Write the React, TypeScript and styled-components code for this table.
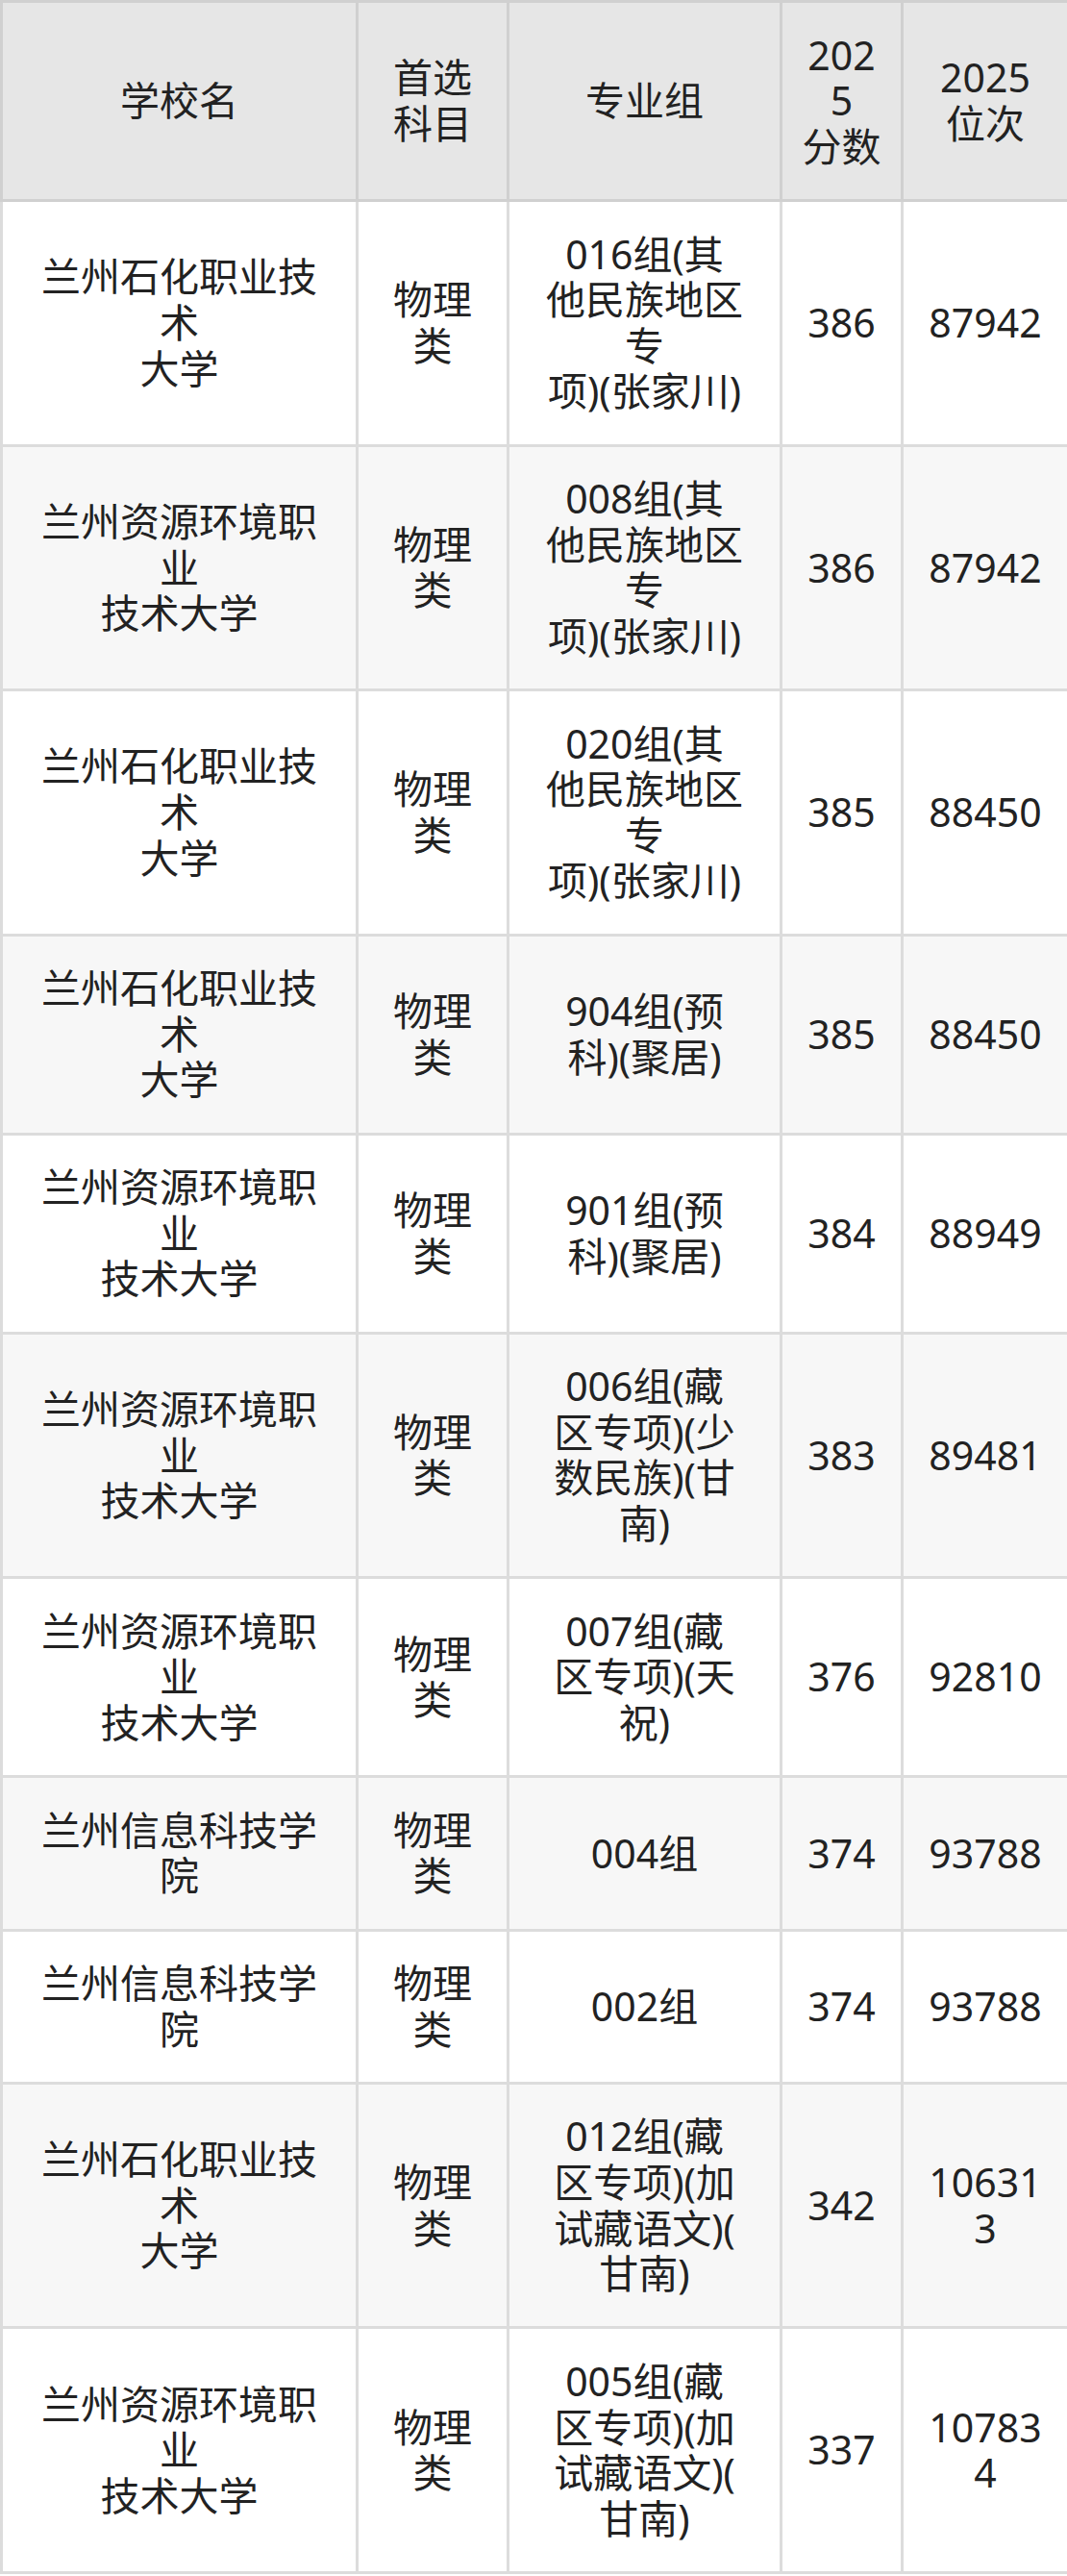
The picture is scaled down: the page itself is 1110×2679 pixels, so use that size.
import React from 'react'
import styled, { createGlobalStyle } from 'styled-components'

const GlobalStyle = createGlobalStyle`
  html, body {
    margin: 0;
    padding: 0;
    background: #fff;
  }
  body {
    font-family: "Noto Sans", "Noto Sans CJK SC", sans-serif;
    color: #222;
  }
`

const Table = styled.table`
  width: 1110px;
  table-layout: fixed;
  border-collapse: collapse;
  font-size: 41px;
  line-height: 47.6px;
`

const HeadCell = styled.th`
  background-color: #e6e6e6;
  border: solid 3px #d0d0d0;
  padding: 30.6px 0;
  font-weight: 400;
  text-align: center;
  vertical-align: middle;
  white-space: nowrap;
`

const Row = styled.tr<{ $alt: boolean }>`
  background-color: ${(p) => (p.$alt ? '#f7f7f7' : '#fff')};
`

const Cell = styled.td`
  border: solid 3px #dcdcdc;
  padding: 30.6px 0;
  text-align: center;
  vertical-align: middle;
  white-space: nowrap;
`

const widths = [370, 157, 284, 126, 173]

const head = [['学校名'], ['首选', '科目'], ['专业组'], ['202', '5', '分数'], ['2025', '位次']]

const shihua = ['兰州石化职业技', '术', '大学']
const ziyuan = ['兰州资源环境职', '业', '技术大学']
const xinxi = ['兰州信息科技学', '院']
const wuli = ['物理', '类']

//prettier-ignore
const rows: string[][][] = [
  [shihua, wuli, ['016组(其', '他民族地区', '专', '项)(张家川)'], ['386'], ['87942']],
  [ziyuan, wuli, ['008组(其', '他民族地区', '专', '项)(张家川)'], ['386'], ['87942']],
  [shihua, wuli, ['020组(其', '他民族地区', '专', '项)(张家川)'], ['385'], ['88450']],
  [shihua, wuli, ['904组(预', '科)(聚居)'], ['385'], ['88450']],
  [ziyuan, wuli, ['901组(预', '科)(聚居)'], ['384'], ['88949']],
  [ziyuan, wuli, ['006组(藏', '区专项)(少', '数民族)(甘', '南)'], ['383'], ['89481']],
  [ziyuan, wuli, ['007组(藏', '区专项)(天', '祝)'], ['376'], ['92810']],
  [xinxi, wuli, ['004组'], ['374'], ['93788']],
  [xinxi, wuli, ['002组'], ['374'], ['93788']],
  [shihua, wuli, ['012组(藏', '区专项)(加', '试藏语文)(', '甘南)'], ['342'], ['10631', '3']],
  [ziyuan, wuli, ['005组(藏', '区专项)(加', '试藏语文)(', '甘南)'], ['337'], ['10783', '4']],
]

const Lines = ({ lines }: { lines: string[] }) => (
  <>
    {lines.map((l, i) => (
      <React.Fragment key={i}>
        {i > 0 && <br />}
        {l}
      </React.Fragment>
    ))}
  </>
)

const App = () => {
  return (
    <>
      <GlobalStyle />
      <Table>
        <colgroup>
          {widths.map((w, i) => (
            <col key={i} style={{ width: w }} />
          ))}
        </colgroup>
        <thead>
          <tr>
            {head.map((h, i) => (
              <HeadCell key={i}>
                <Lines lines={h} />
              </HeadCell>
            ))}
          </tr>
        </thead>
        <tbody>
          {rows.map((row, y) => (
            <Row key={y} $alt={y % 2 === 1}>
              {row.map((cell, x) => (
                <Cell key={x}>
                  <Lines lines={cell} />
                </Cell>
              ))}
            </Row>
          ))}
        </tbody>
      </Table>
    </>
  )
}

export default App
